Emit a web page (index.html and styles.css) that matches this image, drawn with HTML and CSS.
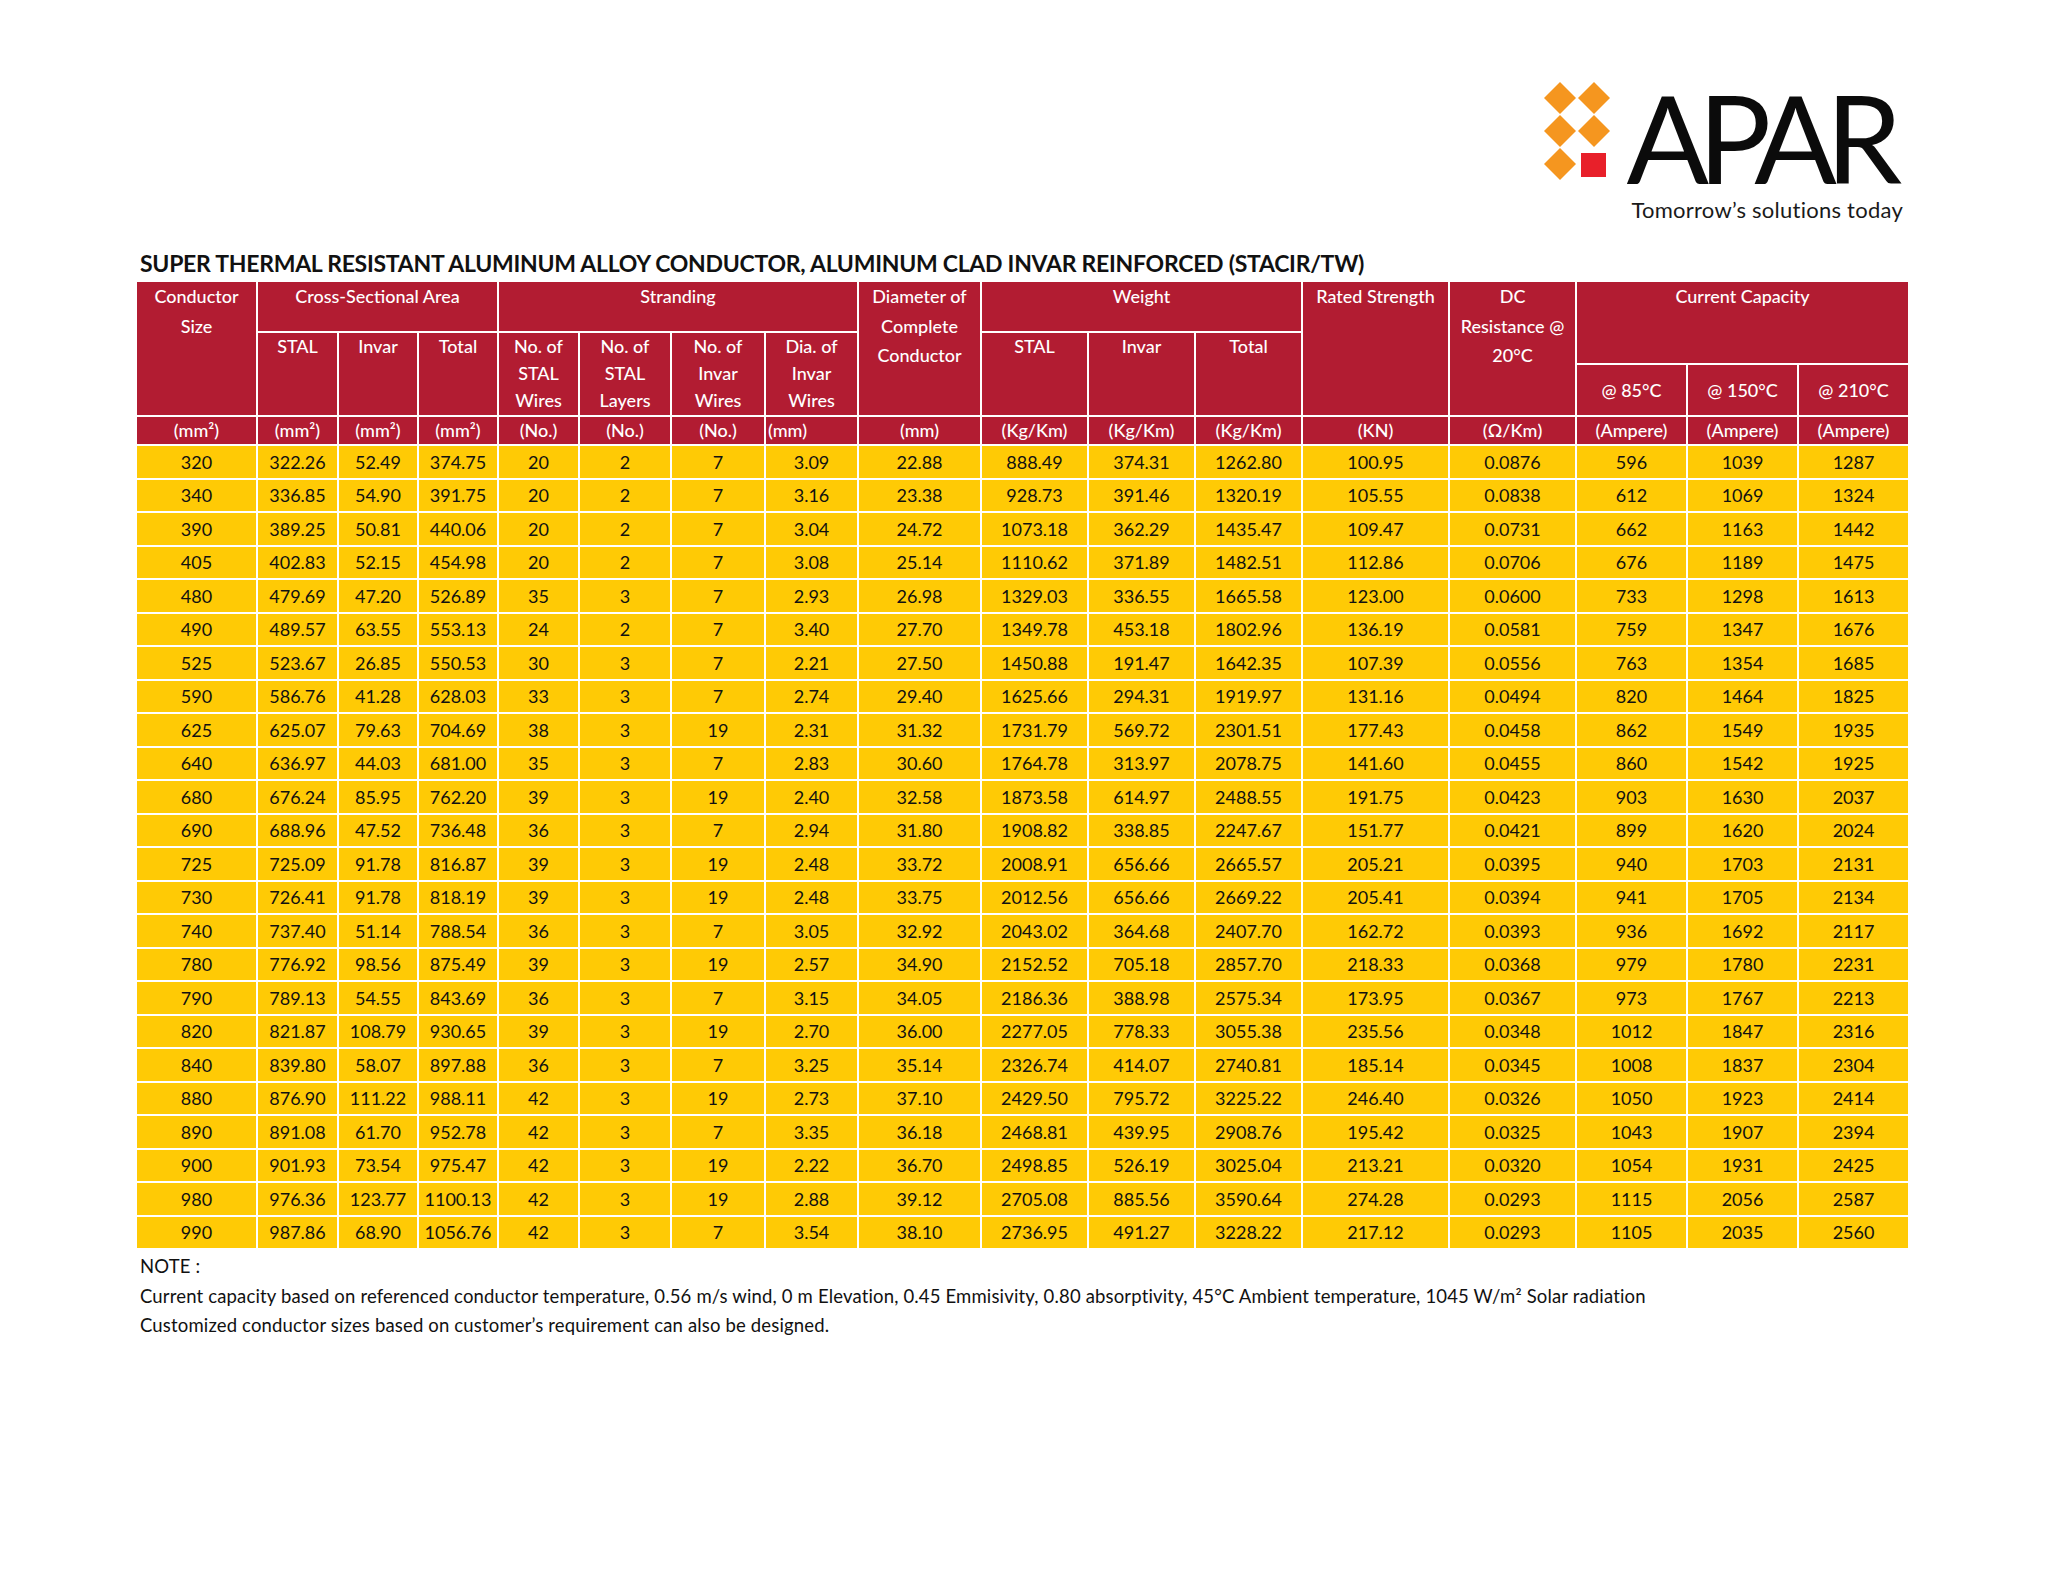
FILE: index.html
```html
<!DOCTYPE html>
<html lang="en">
<head>
<meta charset="utf-8">
<title>STACIR/TW – APAR</title>
<link rel="stylesheet" href="styles.css">
</head>
<body>
<header class="top">
  <div class="logo">
    <svg class="mark" width="68" height="102" viewBox="0 0 68 102" aria-hidden="true">
      <polygon fill="#F5961F" points="17,1 33,17 17,33 1,17"/>
      <polygon fill="#F5961F" points="51,1 67,17 51,33 35,17"/>
      <polygon fill="#F5961F" points="17,34 33,50 17,66 1,50"/>
      <polygon fill="#F5961F" points="51,34 67,50 51,66 35,50"/>
      <polygon fill="#F5961F" points="17,67 33,83 17,99 1,83"/>
      <rect fill="#E8202A" x="38" y="72" width="25" height="24"/>
    </svg>
    <div class="brand">
      <div class="word">APAR</div>
      <div class="tag">Tomorrow’s solutions today</div>
    </div>
  </div>
</header>
<main class="sheet">
  <h1 class="title">SUPER THERMAL RESISTANT ALUMINUM ALLOY CONDUCTOR, ALUMINUM CLAD INVAR REINFORCED (STACIR/TW)</h1>
  <table class="spec">
    <colgroup>
      <col class="w119"><col class="w79"><col class="w78"><col class="w78"><col class="w79"><col class="w90"><col class="w92"><col class="w91"><col class="w121"><col class="w105"><col class="w105"><col class="w105"><col class="w145"><col class="w125"><col class="w109"><col class="w109"><col class="w109">
    </colgroup>
    <thead>
      <tr class="h1">
        <th rowspan="3" class="tall">Conductor<br>Size</th>
        <th colspan="3">Cross-Sectional Area</th>
        <th colspan="4">Stranding</th>
        <th rowspan="3" class="tall">Diameter of<br>Complete<br>Conductor</th>
        <th colspan="3">Weight</th>
        <th rowspan="3" class="tall">Rated Strength</th>
        <th rowspan="3" class="tall">DC<br>Resistance @<br>20°C</th>
        <th colspan="3" rowspan="2">Current Capacity</th>
      </tr>
      <tr class="h2">
        <th rowspan="2" class="sub">STAL</th>
        <th rowspan="2" class="sub">Invar</th>
        <th rowspan="2" class="sub">Total</th>
        <th rowspan="2" class="sub">No. of<br>STAL<br>Wires</th>
        <th rowspan="2" class="sub">No. of<br>STAL<br>Layers</th>
        <th rowspan="2" class="sub">No. of<br>Invar<br>Wires</th>
        <th rowspan="2" class="sub">Dia. of<br>Invar<br>Wires</th>
        <th rowspan="2" class="sub">STAL</th>
        <th rowspan="2" class="sub">Invar</th>
        <th rowspan="2" class="sub">Total</th>
      </tr>
      <tr class="h3">
        <th class="mid">@ 85°C</th>
        <th class="mid">@ 150°C</th>
        <th class="mid">@ 210°C</th>
      </tr>
      <tr class="units">
        <th>(mm²)</th><th>(mm²)</th><th>(mm²)</th><th>(mm²)</th><th>(No.)</th><th>(No.)</th><th>(No.)</th><th class="left">(mm)</th><th>(mm)</th><th>(Kg/Km)</th><th>(Kg/Km)</th><th>(Kg/Km)</th><th>(KN)</th><th>(Ω/Km)</th><th>(Ampere)</th><th>(Ampere)</th><th>(Ampere)</th>
      </tr>
    </thead>
    <tbody>
      <tr><td>320</td><td>322.26</td><td>52.49</td><td>374.75</td><td>20</td><td>2</td><td>7</td><td>3.09</td><td>22.88</td><td>888.49</td><td>374.31</td><td>1262.80</td><td>100.95</td><td>0.0876</td><td>596</td><td>1039</td><td>1287</td></tr>
      <tr><td>340</td><td>336.85</td><td>54.90</td><td>391.75</td><td>20</td><td>2</td><td>7</td><td>3.16</td><td>23.38</td><td>928.73</td><td>391.46</td><td>1320.19</td><td>105.55</td><td>0.0838</td><td>612</td><td>1069</td><td>1324</td></tr>
      <tr><td>390</td><td>389.25</td><td>50.81</td><td>440.06</td><td>20</td><td>2</td><td>7</td><td>3.04</td><td>24.72</td><td>1073.18</td><td>362.29</td><td>1435.47</td><td>109.47</td><td>0.0731</td><td>662</td><td>1163</td><td>1442</td></tr>
      <tr><td>405</td><td>402.83</td><td>52.15</td><td>454.98</td><td>20</td><td>2</td><td>7</td><td>3.08</td><td>25.14</td><td>1110.62</td><td>371.89</td><td>1482.51</td><td>112.86</td><td>0.0706</td><td>676</td><td>1189</td><td>1475</td></tr>
      <tr><td>480</td><td>479.69</td><td>47.20</td><td>526.89</td><td>35</td><td>3</td><td>7</td><td>2.93</td><td>26.98</td><td>1329.03</td><td>336.55</td><td>1665.58</td><td>123.00</td><td>0.0600</td><td>733</td><td>1298</td><td>1613</td></tr>
      <tr><td>490</td><td>489.57</td><td>63.55</td><td>553.13</td><td>24</td><td>2</td><td>7</td><td>3.40</td><td>27.70</td><td>1349.78</td><td>453.18</td><td>1802.96</td><td>136.19</td><td>0.0581</td><td>759</td><td>1347</td><td>1676</td></tr>
      <tr><td>525</td><td>523.67</td><td>26.85</td><td>550.53</td><td>30</td><td>3</td><td>7</td><td>2.21</td><td>27.50</td><td>1450.88</td><td>191.47</td><td>1642.35</td><td>107.39</td><td>0.0556</td><td>763</td><td>1354</td><td>1685</td></tr>
      <tr><td>590</td><td>586.76</td><td>41.28</td><td>628.03</td><td>33</td><td>3</td><td>7</td><td>2.74</td><td>29.40</td><td>1625.66</td><td>294.31</td><td>1919.97</td><td>131.16</td><td>0.0494</td><td>820</td><td>1464</td><td>1825</td></tr>
      <tr><td>625</td><td>625.07</td><td>79.63</td><td>704.69</td><td>38</td><td>3</td><td>19</td><td>2.31</td><td>31.32</td><td>1731.79</td><td>569.72</td><td>2301.51</td><td>177.43</td><td>0.0458</td><td>862</td><td>1549</td><td>1935</td></tr>
      <tr><td>640</td><td>636.97</td><td>44.03</td><td>681.00</td><td>35</td><td>3</td><td>7</td><td>2.83</td><td>30.60</td><td>1764.78</td><td>313.97</td><td>2078.75</td><td>141.60</td><td>0.0455</td><td>860</td><td>1542</td><td>1925</td></tr>
      <tr><td>680</td><td>676.24</td><td>85.95</td><td>762.20</td><td>39</td><td>3</td><td>19</td><td>2.40</td><td>32.58</td><td>1873.58</td><td>614.97</td><td>2488.55</td><td>191.75</td><td>0.0423</td><td>903</td><td>1630</td><td>2037</td></tr>
      <tr><td>690</td><td>688.96</td><td>47.52</td><td>736.48</td><td>36</td><td>3</td><td>7</td><td>2.94</td><td>31.80</td><td>1908.82</td><td>338.85</td><td>2247.67</td><td>151.77</td><td>0.0421</td><td>899</td><td>1620</td><td>2024</td></tr>
      <tr><td>725</td><td>725.09</td><td>91.78</td><td>816.87</td><td>39</td><td>3</td><td>19</td><td>2.48</td><td>33.72</td><td>2008.91</td><td>656.66</td><td>2665.57</td><td>205.21</td><td>0.0395</td><td>940</td><td>1703</td><td>2131</td></tr>
      <tr><td>730</td><td>726.41</td><td>91.78</td><td>818.19</td><td>39</td><td>3</td><td>19</td><td>2.48</td><td>33.75</td><td>2012.56</td><td>656.66</td><td>2669.22</td><td>205.41</td><td>0.0394</td><td>941</td><td>1705</td><td>2134</td></tr>
      <tr><td>740</td><td>737.40</td><td>51.14</td><td>788.54</td><td>36</td><td>3</td><td>7</td><td>3.05</td><td>32.92</td><td>2043.02</td><td>364.68</td><td>2407.70</td><td>162.72</td><td>0.0393</td><td>936</td><td>1692</td><td>2117</td></tr>
      <tr><td>780</td><td>776.92</td><td>98.56</td><td>875.49</td><td>39</td><td>3</td><td>19</td><td>2.57</td><td>34.90</td><td>2152.52</td><td>705.18</td><td>2857.70</td><td>218.33</td><td>0.0368</td><td>979</td><td>1780</td><td>2231</td></tr>
      <tr><td>790</td><td>789.13</td><td>54.55</td><td>843.69</td><td>36</td><td>3</td><td>7</td><td>3.15</td><td>34.05</td><td>2186.36</td><td>388.98</td><td>2575.34</td><td>173.95</td><td>0.0367</td><td>973</td><td>1767</td><td>2213</td></tr>
      <tr><td>820</td><td>821.87</td><td>108.79</td><td>930.65</td><td>39</td><td>3</td><td>19</td><td>2.70</td><td>36.00</td><td>2277.05</td><td>778.33</td><td>3055.38</td><td>235.56</td><td>0.0348</td><td>1012</td><td>1847</td><td>2316</td></tr>
      <tr><td>840</td><td>839.80</td><td>58.07</td><td>897.88</td><td>36</td><td>3</td><td>7</td><td>3.25</td><td>35.14</td><td>2326.74</td><td>414.07</td><td>2740.81</td><td>185.14</td><td>0.0345</td><td>1008</td><td>1837</td><td>2304</td></tr>
      <tr><td>880</td><td>876.90</td><td>111.22</td><td>988.11</td><td>42</td><td>3</td><td>19</td><td>2.73</td><td>37.10</td><td>2429.50</td><td>795.72</td><td>3225.22</td><td>246.40</td><td>0.0326</td><td>1050</td><td>1923</td><td>2414</td></tr>
      <tr><td>890</td><td>891.08</td><td>61.70</td><td>952.78</td><td>42</td><td>3</td><td>7</td><td>3.35</td><td>36.18</td><td>2468.81</td><td>439.95</td><td>2908.76</td><td>195.42</td><td>0.0325</td><td>1043</td><td>1907</td><td>2394</td></tr>
      <tr><td>900</td><td>901.93</td><td>73.54</td><td>975.47</td><td>42</td><td>3</td><td>19</td><td>2.22</td><td>36.70</td><td>2498.85</td><td>526.19</td><td>3025.04</td><td>213.21</td><td>0.0320</td><td>1054</td><td>1931</td><td>2425</td></tr>
      <tr><td>980</td><td>976.36</td><td>123.77</td><td>1100.13</td><td>42</td><td>3</td><td>19</td><td>2.88</td><td>39.12</td><td>2705.08</td><td>885.56</td><td>3590.64</td><td>274.28</td><td>0.0293</td><td>1115</td><td>2056</td><td>2587</td></tr>
      <tr><td>990</td><td>987.86</td><td>68.90</td><td>1056.76</td><td>42</td><td>3</td><td>7</td><td>3.54</td><td>38.10</td><td>2736.95</td><td>491.27</td><td>3228.22</td><td>217.12</td><td>0.0293</td><td>1105</td><td>2035</td><td>2560</td></tr>
    </tbody>
  </table>
  <div class="notes">
    <p>NOTE :</p>
    <p>Current capacity based on referenced conductor temperature, 0.56 m/s wind, 0 m Elevation, 0.45 Emmisivity, 0.80 absorptivity, 45°C Ambient temperature, 1045 W/m² Solar radiation</p>
    <p>Customized conductor sizes based on customer’s requirement can also be designed.</p>
  </div>
</main>
</body>
</html>
```
FILE: styles.css
```css
* { box-sizing: border-box; }
html, body { margin: 0; padding: 0; background: #fff; }
body {
  font-family: "Lato", "Open Sans", "Liberation Sans", sans-serif;
  color: #111;
  width: 2048px;
  min-height: 1582px;
}

.top {
  display: flex;
  justify-content: flex-end;
  padding: 81px 145px 0 0;
  height: 223px;
}
.logo { display: flex; align-items: flex-start; gap: 17px; }
.mark { display: block; flex: none; }
.brand { display: flex; flex-direction: column; align-items: flex-start; padding-top: 6px; }
.word {
  font-size: 122px;
  line-height: 100px;
  height: 100px;
  font-weight: 400;
  color: #0b0b0b;
  letter-spacing: -11px;
  margin-left: -2px;
}
.tag {
  margin-top: 10px;
  font-size: 22px;
  line-height: 26px;
  color: #1a1a1a;
  letter-spacing: 0.25px;
  padding-left: 3px;
  white-space: nowrap;
}

.sheet { padding-left: 135px; }
.title {
  margin: 26px 0 3px 5px;
  font-size: 23px;
  line-height: 28px;
  font-weight: 700;
  color: #111;
  letter-spacing: -0.27px;
}

.spec {
  table-layout: fixed;
  width: 1775px;
  border-collapse: separate;
  border-spacing: 2px;
  font-size: 18px;
}
.w119 { width: 119px; } .w79 { width: 79px; } .w78 { width: 78px; }
.w90 { width: 90px; } .w92 { width: 92px; } .w91 { width: 91px; }
.w121 { width: 121px; } .w105 { width: 105px; } .w145 { width: 145px; }
.w125 { width: 125px; } .w109 { width: 109px; }

.spec th {
  background: #B21C32;
  color: #fff;
  font-weight: 500;
  padding: 0;
  text-align: center;
  vertical-align: top;
  line-height: 29px;
}
.spec tr.h1 { height: 49px; }
.spec tr.h2 { height: 30px; }
.spec tr.h3 { height: 50px; }
.spec th.tall { line-height: 29.5px; }
.spec th.sub { line-height: 27px; }
.spec th.mid { vertical-align: middle; }
.spec tr.units { height: 27px; }
.spec .units th { line-height: 27px; vertical-align: middle; }
.spec .units th.left { text-align: left; padding-left: 2px; }

.spec tbody tr { height: 31.5px; }
.spec td {
  background: #FFCA05;
  color: #111;
  padding: 0;
  text-align: center;
  vertical-align: middle;
  line-height: 20px;
}

.notes {
  padding-left: 5px;
  margin-top: 2px;
  font-size: 18.5px;
  line-height: 29.5px;
  letter-spacing: 0.16px;
  color: #111;
}
.notes p { margin: 0; }
```
